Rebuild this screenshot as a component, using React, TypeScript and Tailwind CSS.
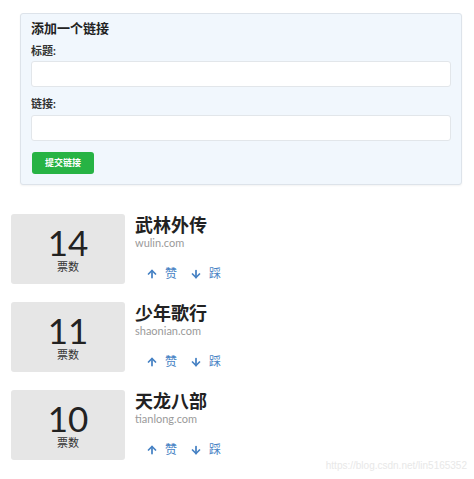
import { ArrowDown, ArrowUp } from "lucide-react";

interface Link {
  title: string;
  domain: string;
  votes: number;
}

const links: Link[] = [
  { title: "武林外传", domain: "wulin.com", votes: 14 },
  { title: "少年歌行", domain: "shaonian.com", votes: 11 },
  { title: "天龙八部", domain: "tianlong.com", votes: 10 },
];

const font = { fontFamily: 'Lato, "Noto Sans CJK SC", sans-serif' };

const LinkRow = ({ link }: { link: Link }) => {
  return (
    <div className="flex">
      <div className="flex flex-col items-center w-[114px] h-[70px] rounded-[3px] bg-[#e6e6e6] pt-[10px] text-[#222]">
        <span className="text-[35px] leading-[36px] font-normal">{link.votes}</span>
        <span className="text-[11px] leading-[14px] text-[#333]">票数</span>
      </div>
      <div className="flex flex-col ml-[10px]">
        <span className="text-[18px] leading-[22px] font-bold text-[#222]">{link.title}</span>
        <span className="text-[11px] leading-[14px] text-[#9a9a9a]">{link.domain}</span>
        <div className="flex items-center mt-[16px] ml-[11px] text-[12px] leading-[16px] text-[#4682c4]">
          <button className="flex items-center gap-[7px]">
            <ArrowUp size={12} strokeWidth={3.5} />
            <span>赞</span>
          </button>
          <button className="flex items-center gap-[7px] ml-[13px]">
            <ArrowDown size={12} strokeWidth={3.5} />
            <span>踩</span>
          </button>
        </div>
      </div>
    </div>
  );
};

export default function App() {
  return (
    <div className="relative w-[474px] h-[479px] bg-white overflow-hidden" style={font}>
      <div className="ml-[20px] mt-[13px] w-[442px] rounded-[3px] border border-[#dde3ea] bg-[#f1f7fd] px-[10px] pt-[6px] pb-[10px] shadow-[0_1px_2px_rgba(0,0,0,0.05)]">
        <h3 className="text-[13px] leading-[16px] font-bold text-[#222]">添加一个链接</h3>
        <label className="block mt-[8px] text-[11px] leading-[14px] font-bold text-[#333]">标题:</label>
        <input className="block mt-[3px] w-full h-[26px] rounded-[3px] border border-[#e2e6ea] bg-white" />
        <label className="block mt-[10px] text-[11px] leading-[14px] font-bold text-[#333]">链接:</label>
        <input className="block mt-[4px] w-full h-[26px] rounded-[3px] border border-[#e2e6ea] bg-white" />
        <button className="block mt-[11px] ml-px w-[62px] h-[22px] rounded-[3px] bg-[#27b344] text-[9px] font-bold text-white">
          提交链接
        </button>
      </div>
      <div className="flex flex-col gap-[18px] mt-[29px] ml-[11px]">
        {links.map((link) => (
          <LinkRow key={link.domain} link={link} />
        ))}
      </div>
      <span
        className="absolute right-[7px] bottom-[6px] text-[10px] text-[#e8e8e8]"
        style={{ fontFamily: '"Liberation Sans", sans-serif' }}
      >
        https://blog.csdn.net/lin5165352
      </span>
    </div>
  );
}
